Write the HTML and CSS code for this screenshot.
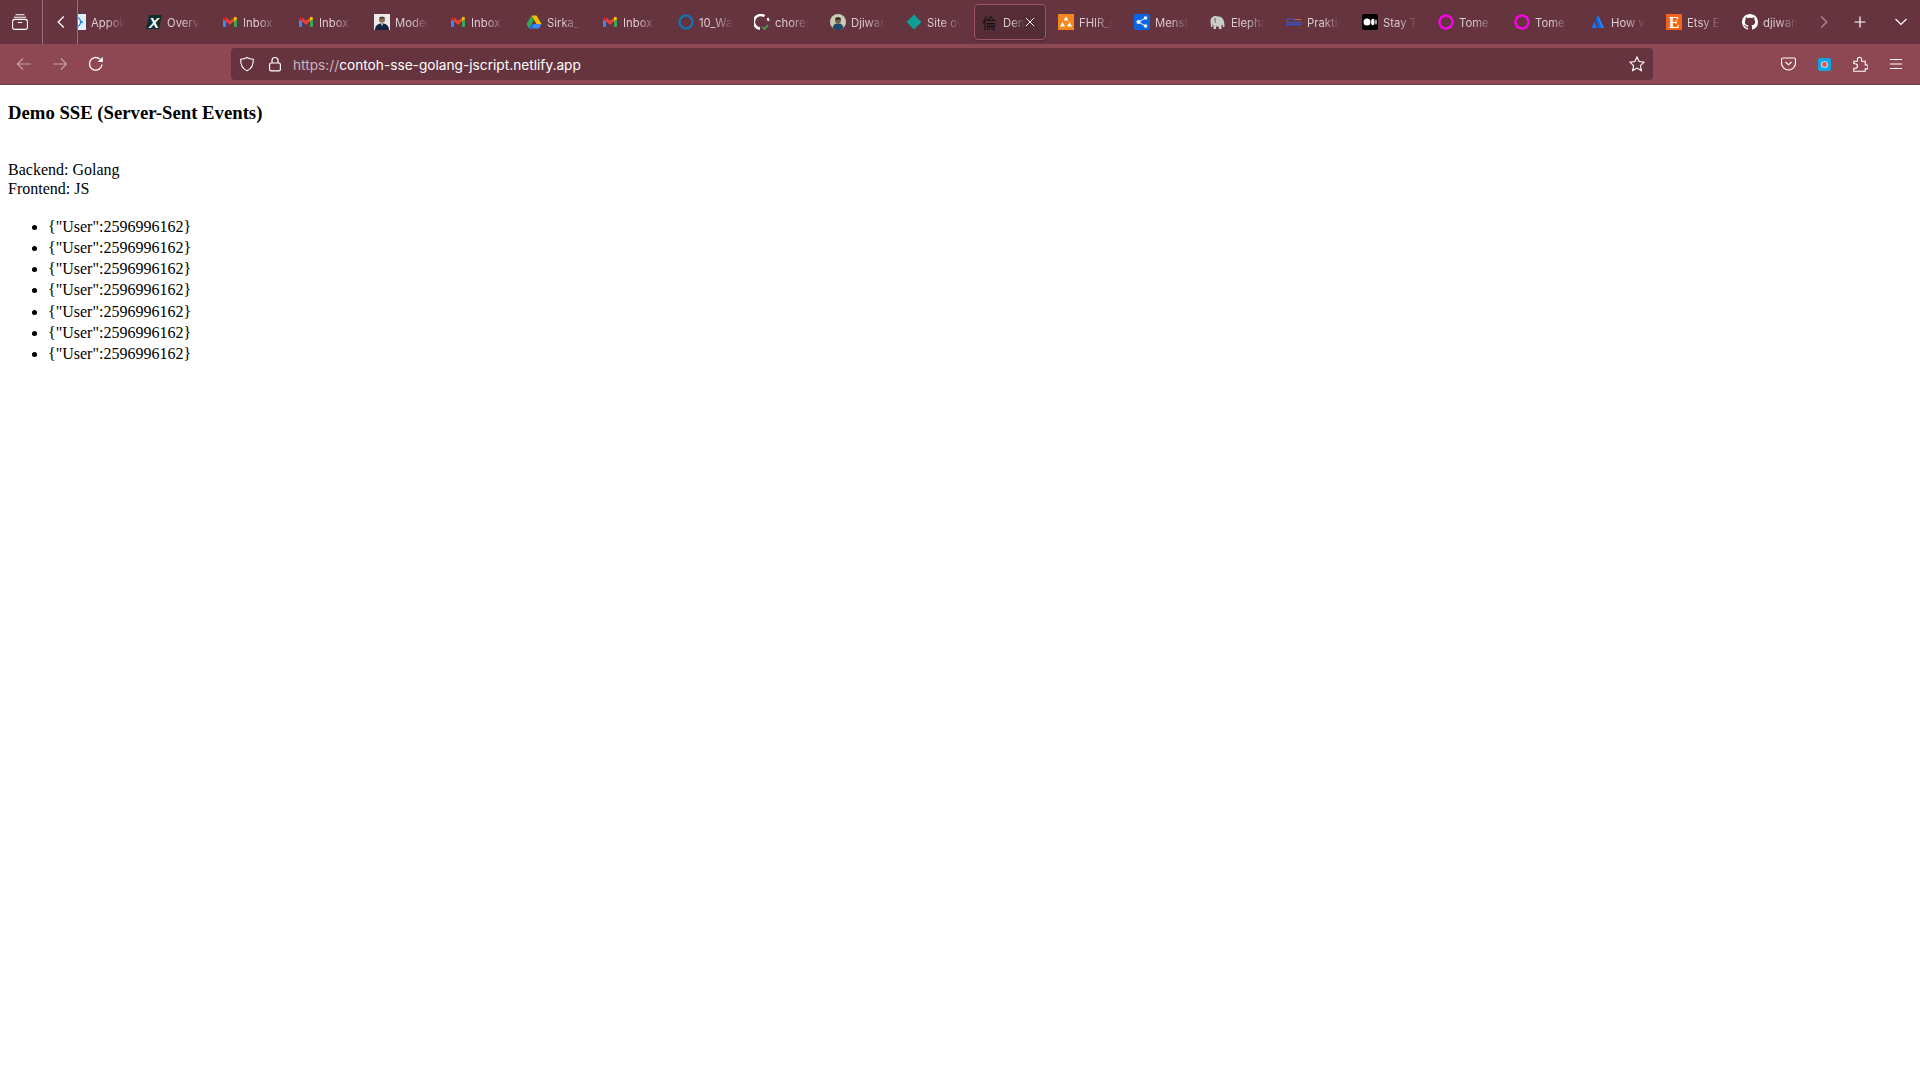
FILE: index.html
```html
<!DOCTYPE html>
<html lang="en">
<head>
<meta charset="utf-8">
<title>Demo SSE</title>
<link rel="stylesheet" href="styles.css">
</head>
<body>
<header class="chrome">
  <div class="tabbar">
    <button class="tb-btn view-btn" aria-label="Firefox View">
      <svg width="16" height="16" viewBox="0 0 16 16" fill="none" stroke="#fff" stroke-width="1.100"><path d="M3.500 .8h9M1.800 3.300h12.400"/><rect x=".6" y="5.400" width="14.800" height="10" rx="2.200"/><path d="M5.800 8.500h4.400"/></svg>
    </button>
    <button class="tb-btn scroll-left" aria-label="Scroll left">
      <svg width="12" height="14" viewBox="0 0 12 14" fill="none" stroke="#fff" stroke-width="1.300"><path d="M8.800 1.500 3.200 7l5.600 5.500"/></svg>
    </button>
    <div class="tabs">
      <div class="tab first"><span class="fav"><svg viewBox="0 0 16 16"><rect width="16" height="16" fill="#dbeeff"/><circle cx="6" cy="8" r="4.600" fill="#fff" stroke="#1e88e5" stroke-width="1.300"/><path d="M6 5.500V8h2" stroke="#1e88e5" fill="none"/><path d="m11 6.500 2.500 1.500-2.500 1.500z" fill="#1e88e5"/></svg></span><span class="lbl">Appoir</span></div>
      <div class="tab"><span class="fav"><svg viewBox="0 0 16 16"><path d="M3 1h13l-3 14H0z" fill="#10302f"/><text x="8" y="13.500" text-anchor="middle" class="x-mark">X</text></svg></span><span class="lbl">Overvi</span></div>
      <div class="tab"><span class="fav"><svg viewBox="0 0 16 16"><use href="#gmail"/></svg></span><span class="lbl">Inbox (</span></div>
      <div class="tab"><span class="fav"><svg viewBox="0 0 16 16"><use href="#gmail"/></svg></span><span class="lbl">Inbox (</span></div>
      <div class="tab"><span class="fav"><svg viewBox="0 0 16 16"><rect width="16" height="16" fill="#eceae8"/><circle cx="8" cy="5.800" r="3" fill="#8a6a58"/><path d="M5 4.500c0-2.500 6-2.500 6 0z" fill="#4a3a34"/><path d="M1 16c0-5 3.500-6.500 7-6.500s7 1.500 7 6.500z" fill="#14233f"/><path d="M7 9.500h2l-1 3z" fill="#e8e4e2"/></svg></span><span class="lbl">Moder</span></div>
      <div class="tab"><span class="fav"><svg viewBox="0 0 16 16"><use href="#gmail"/></svg></span><span class="lbl">Inbox (</span></div>
      <div class="tab"><span class="fav"><svg viewBox="0 0 16 16"><path d="M5.500 1.500h5L15.500 10h-5z" fill="#fbbc04"/><path d="M5.500 1.500 .5 10l2.500 4.500L8 6z" fill="#34a853"/><path d="M3 14.500h10l2.500-4.500h-10z" fill="#4285f4"/><path d="m5.500 10-2.500 4.500h3.500L8 10z" fill="#1a6fd8"/></svg></span><span class="lbl">Sirka_</span></div>
      <div class="tab"><span class="fav"><svg viewBox="0 0 16 16"><use href="#gmail"/></svg></span><span class="lbl">Inbox</span></div>
      <div class="tab"><span class="fav"><svg viewBox="0 0 16 16"><circle cx="8" cy="8" r="6.500" fill="none" stroke="#0a79bd" stroke-width="2.200"/></svg></span><span class="lbl">10_Wa</span></div>
      <div class="tab"><span class="fav"><svg viewBox="0 0 16 16"><path d="M10.500 2.200A6.800 6.800 0 1 0 6 14.600" fill="none" stroke="#fff" stroke-width="2.600"/><path d="M13.500 4a6.500 6.500 0 0 1 1 3" fill="none" stroke="#fff" stroke-width="2"/><path d="m8.500 13 2 2 3.500-4" fill="none" stroke="#3fb950" stroke-width="1.200"/></svg></span><span class="lbl">chore:</span></div>
      <div class="tab"><span class="fav"><svg viewBox="0 0 16 16"><circle cx="8" cy="8" r="8" fill="#c8ccb4"/><circle cx="8" cy="6.500" r="3" fill="#7a5c4c"/><path d="M5 5.500c0-3 6-3 6 0z" fill="#2b2420"/><path d="M2.500 14c1-4 3-4.500 5.500-4.500s4.500 .5 5.500 4.500A8 8 0 0 1 2.500 14z" fill="#1f4a66"/></svg></span><span class="lbl">Djiwan</span></div>
      <div class="tab"><span class="fav"><svg viewBox="0 0 16 16"><path d="M8 .5 15.500 8 8 15.500 .5 8z" fill="#0f9f97"/></svg></span><span class="lbl">Site ov</span></div>
      <div class="tab active"><span class="fav"><span class="kanji">倫</span></span><span class="lbl">Den</span>
        <svg class="close" width="10" height="10" viewBox="0 0 10 10" stroke="#fff" stroke-width="1"><path d="M1 1l8 8M9 1 1 9"/></svg>
      </div>
      <div class="tab"><span class="fav"><svg viewBox="0 0 16 16"><rect width="16" height="16" fill="#f5871f"/><path d="M8 2.500 10.500 6.500h-5zM4.500 8 7 12.500H2zM11.500 8 14 12.500H9z" fill="#fff"/></svg></span><span class="lbl">FHIR_s</span></div>
      <div class="tab"><span class="fav"><svg viewBox="0 0 16 16"><rect width="16" height="16" rx="2" fill="#0b66e4"/><path d="M4.500 8 11.500 4M4.500 8l7 4" stroke="#fff"/><circle cx="4.500" cy="8" r="2" fill="#fff"/><circle cx="11.500" cy="4" r="1.800" fill="#fff"/><circle cx="11.500" cy="12" r="1.800" fill="#fff"/></svg></span><span class="lbl">Menst</span></div>
      <div class="tab"><span class="fav"><svg viewBox="0 0 16 16"><path d="M.5 7c0-3 2.500-5 5-5 1 0 2 .5 3 .5 3 0 5 2 5.500 5 .3 2 .5 3 .5 5.500h-1.500l-.5-2.500-1 1V15h-2.500l-.5-2.500H6V15H3.500v-3l-1-2V13H1z" fill="#c9ccc8"/><path d="M4 4v4l2 1V4z" fill="#8f9490"/></svg></span><span class="lbl">Elepha</span></div>
      <div class="tab"><span class="fav"><svg viewBox="0 0 16 16"><path d="M1 5h8M1 5v3" fill="none" stroke="#4a4fb0" stroke-width="1.200"/><path d="M1 8.500h15M0 10.500h16" stroke="#3a50c0" stroke-width="1.300"/><path d="M9 5.500h6" stroke="#c2703a"/></svg></span><span class="lbl">Praktis</span></div>
      <div class="tab"><span class="fav"><svg viewBox="0 0 16 16"><rect width="16" height="16" rx="2" fill="#000"/><circle cx="5" cy="8" r="3.500" fill="#fff"/><ellipse cx="10.800" cy="8" rx="1.700" ry="3.200" fill="#fff"/><ellipse cx="14" cy="8" rx=".7" ry="2.800" fill="#fff"/></svg></span><span class="lbl">Stay T</span></div>
      <div class="tab"><span class="fav"><svg viewBox="0 0 16 16"><use href="#tome"/></svg></span><span class="lbl">Tome</span></div>
      <div class="tab"><span class="fav"><svg viewBox="0 0 16 16"><use href="#tome"/></svg></span><span class="lbl">Tome</span></div>
      <div class="tab"><span class="fav"><svg viewBox="0 0 16 16"><path d="M7.200 1.500 12 14h-3.500L5.700 6z" fill="#0c66e4"/><path d="M8.300 1.500 14 14h-2.500L7.400 3z" fill="#2684ff"/><path d="M4.300 7.500 7 14H1.500z" fill="#1a73f0"/></svg></span><span class="lbl">How w</span></div>
      <div class="tab"><span class="fav"><svg viewBox="0 0 16 16"><rect width="16" height="16" fill="#f1641e"/><text x="8" y="13.500" text-anchor="middle" class="etsy-mark">E</text></svg></span><span class="lbl">Etsy E</span></div>
      <div class="tab"><span class="fav"><svg viewBox="0 0 16 16"><path fill="#fff" fill-rule="evenodd" d="M8 0C3.580 0 0 3.580 0 8c0 3.540 2.290 6.530 5.470 7.590.4.070.55-.17.55-.38 0-.19-.01-.82-.01-1.490-2.010.37-2.530-.49-2.690-.94-.09-.23-.48-.94-.82-1.130-.28-.15-.68-.52-.01-.53.630-.01 1.080.58 1.230.82.720 1.210 1.870.87 2.330.66.070-.52.280-.87.510-1.070-1.780-.2-3.640-.89-3.640-3.950 0-.87.310-1.590.820-2.150-.08-.2-.36-1.020.08-2.120 0 0 .67-.21 2.200.82.640-.18 1.320-.27 2-.27s1.360.09 2 .27c1.530-1.040 2.200-.82 2.200-.82.440 1.100.16 1.920.08 2.120.51.560.82 1.270.82 2.150 0 3.070-1.870 3.750-3.650 3.950.29.250.54.730.54 1.480 0 1.070-.01 1.930-.01 2.200 0 .21.150.46.550.38A8.010 8.010 0 0 0 16 8c0-4.420-3.580-8-8-8z"/></svg></span><span class="lbl">djiwan</span></div>
    </div>
    <button class="tb-btn scroll-right" aria-label="Scroll right">
      <svg width="12" height="14" viewBox="0 0 12 14" fill="none" stroke="#a98b92" stroke-width="1.300"><path d="M3.200 1.500 8.800 7l-5.600 5.500"/></svg>
    </button>
    <button class="tb-btn new-tab" aria-label="New tab">
      <svg width="14" height="14" viewBox="0 0 14 14" stroke="#fff" stroke-width="1.200"><path d="M7 1.500v11M1.500 7h11"/></svg>
    </button>
    <button class="tb-btn all-tabs" aria-label="All tabs">
      <svg width="14" height="10" viewBox="0 0 14 10" fill="none" stroke="#fff" stroke-width="1.200"><path d="M1.500 2 7 7.500 12.500 2"/></svg>
    </button>
  </div>
  <nav class="navbar">
    <button class="nav-btn dim" aria-label="Back"><svg width="16" height="14" viewBox="0 0 16 14" fill="none" stroke="#c4a0a8" stroke-width="1.100"><path d="M15 7H1.500M7 1.500 1.500 7 7 12.500"/></svg></button>
    <button class="nav-btn dim" aria-label="Forward"><svg width="16" height="14" viewBox="0 0 16 14" fill="none" stroke="#c4a0a8" stroke-width="1.100"><path d="M1 7h13.500M9 1.500 14.500 7 9 12.500"/></svg></button>
    <button class="nav-btn" aria-label="Reload"><svg width="16" height="16" viewBox="0 0 16 16" fill="none" stroke="#fff" stroke-width="1.300"><path d="M14 8.500A6.300 6.300 0 1 1 11.800 3"/><path d="M14.800 .8v5.200H9.600z" fill="#fff" stroke="none"/></svg></button>
    <div class="urlbar">
      <svg class="shield" width="16" height="16" viewBox="0 0 16 16" fill="none" stroke="#fff" stroke-width="1.100"><path d="M8 1.500c2 1.200 4 1.600 6.300 1.700.2 5.800-1.700 9.600-6.300 11.500C3.400 12.800 1.500 9 1.700 3.200 4 3.100 6 2.700 8 1.500z"/></svg>
      <svg class="lock" width="14" height="16" viewBox="0 0 14 16" fill="none" stroke="#fff" stroke-width="1.200"><rect x="1.600" y="7" width="10.800" height="7.800" rx="1.600"/><path d="M4 7V4.500a3 3 0 0 1 6 0V7"/></svg>
      <div class="url"><span class="scheme">https://</span>contoh-sse-golang-jscript.netlify.app</div>
      <svg class="star" width="16" height="16" viewBox="0 0 16 16" fill="none" stroke="#fff" stroke-width="1.100"><path d="m8 1 2.100 4.600 5 .6-3.700 3.400 1 5L8 12.100l-4.400 2.500 1-5L.9 6.200l5-.6z"/></svg>
    </div>
    <div class="nav-tools">
      <span class="tool"><svg width="15" height="14" viewBox="0 0 15 14" fill="none" stroke="#fff" stroke-width="1.100"><path d="M2 1h11a1.500 1.500 0 0 1 1.500 1.500V6A7 7 0 0 1 .5 6V2.500A1.500 1.500 0 0 1 2 1z"/><path d="m4.500 5 3 2.800 3-2.800"/></svg></span>
      <span class="tool"><svg width="13" height="13" viewBox="0 0 13 13"><rect width="13" height="13" rx="2" fill="#0ca5e0"/><circle cx="6.500" cy="6.500" r="3.600" fill="#9fe4f4"/><circle cx="6.500" cy="6.500" r="2.400" fill="#f0504a"/></svg></span>
      <span class="tool"><svg width="16" height="16" viewBox="0 0 16 16" fill="none" stroke="#fff" stroke-width="1.100"><path d="M1.800 7.500V5.200h3.600V3.400a2.100 2.100 0 0 1 4.200 0v1.800h3.600v3.700h1a2 2 0 0 1 0 4h-1v2.300H1.800v-3h1.400a2.200 2.200 0 0 0 0-4.500z"/></svg></span>
      <span class="tool"><svg width="14" height="12" viewBox="0 0 14 12" stroke="#fff" stroke-width="1.100"><path d="M1 1.500h12M1 6h12M1 10.500h12"/></svg></span>
    </div>
  </nav>
</header>
<main class="page">
  <h3>Demo SSE (Server-Sent Events)</h3>
  <br>
  Backend: Golang<br>
  Frontend: JS
  <ul>
    <li>{"User":2596996162}</li>
    <li>{"User":2596996162}</li>
    <li>{"User":2596996162}</li>
    <li>{"User":2596996162}</li>
    <li>{"User":2596996162}</li>
    <li>{"User":2596996162}</li>
    <li>{"User":2596996162}</li>
  </ul>
</main>
<svg class="defs" width="0" height="0" aria-hidden="true">
  <defs>
    <g id="gmail">
      <path d="M1 5v7a1 1 0 0 0 1 1h2V7z" fill="#4285f4"/>
      <path d="M15 5v7a1 1 0 0 1-1 1h-2V7z" fill="#34a853"/>
      <path d="M4 3.500 8 6.800l4-3.300v4L8 10.800 4 7.500z" fill="#ea4335"/>
      <path d="M1 5c0-2 2-2.800 3-1.500v4L1 5z" fill="#c5221f"/>
      <path d="M15 5c0-2-2-2.800-3-1.500v4L15 5z" fill="#fbbc04"/>
    </g>
    <path id="tome" d="M8 1.200 12.800 3.200 14.800 8 12.800 12.800 8 14.800 3.200 12.800 1.200 8 3.200 3.200z" fill="none" stroke="#ff00f0" stroke-width="2.200"/>
  </defs>
</svg>
</body>
</html>
```
FILE: styles.css
```css
html, body { margin: 0; padding: 0; background: #fff; }
body { font-family: "Liberation Serif", "Times New Roman", serif; font-size: 16px; color: #000; height: 1080px; overflow: hidden; }
button { background: none; border: 0; padding: 0; margin: 0; display: flex; align-items: center; justify-content: center; }
.chrome { font-family: Inter, "Liberation Sans", sans-serif; }
.tabbar { height: 44px; background: #66343e; display: flex; align-items: stretch; }
.tb-btn { flex: none; }
.view-btn { width: 43px; padding-right: 3px; box-sizing: border-box; border-right: 1px solid #96707a; }
.scroll-left { width: 35px; box-sizing: border-box; padding-left: 2px; border-right: 1px solid #96707a; }
.tabs { flex: none; display: flex; overflow: hidden; width: 1737px; }
.tab { flex: none; width: 76px; box-sizing: border-box; display: flex; align-items: center; padding: 0 13px 0 8px; gap: 5px; color: #fff; position: relative; height: 44px; }
.tab.first { margin-left: -16px; }
.fav { flex: none; width: 16px; height: 16px; display: flex; }
.fav svg { width: 16px; height: 16px; display: block; }
.lbl { flex: 1; min-width: 0; overflow: hidden; white-space: nowrap; font-size: 11.300px; line-height: 16px; padding-top: 2px; color: #dccbd0; -webkit-mask-image: linear-gradient(to right, #000 45%, transparent 100%); mask-image: linear-gradient(to right, #000 45%, transparent 100%); }
.tab.active::before { content: ""; position: absolute; left: 0; top: 4px; bottom: 4px; right: 4px; background: #542d36; border: 1px solid #a0566a; border-radius: 4px; box-sizing: border-box; box-shadow: 0 1px 2px rgba(0,0,0,.2); }
.tab.active > * { position: relative; }
.tab.active .lbl { flex: none; width: 22px; -webkit-mask-image: linear-gradient(to right, #000 40%, transparent 100%); mask-image: linear-gradient(to right, #000 40%, transparent 100%); }
.tab.active .close { flex: none; position: absolute; right: 15px; top: 17px; }
.kanji { font-family: "Noto Sans CJK TC", sans-serif; font-size: 14px; line-height: 16px; color: #111; }
.x-mark { font-family: "Liberation Sans", sans-serif; font-weight: 700; font-style: italic; font-size: 15px; fill: #fff; }
.etsy-mark { font-family: "Liberation Serif", serif; font-weight: 700; font-size: 16px; fill: #fff; }
.scroll-right { width: 18px; }
.new-tab { width: 44px; margin-left: 5px; }
.all-tabs { width: 34px; margin-left: 2px; padding-bottom: 1px; }
.navbar { height: 40px; background: #8e4854; display: flex; align-items: center; border-bottom: 1px solid #6e3a46; box-sizing: content-box; padding-right: 6px; }
.nav-btn { flex: none; width: 36px; height: 40px; }
.nav-btn:first-child { margin-left: 6px; }
.urlbar { flex: none; margin-left: 117px; width: 1422px; height: 32px; border-radius: 4px; background: #66343e; display: flex; align-items: center; padding: 0 8px; box-sizing: border-box; color: #fff; }
.shield { flex: none; margin-left: 0; }
.lock { flex: none; margin-left: 13px; }
.url { flex: 1; margin-left: 11px; font-size: 13.700px; padding-top: 1px; white-space: nowrap; }
.scheme { color: #c9b5ba; }
.star { flex: none; }
.nav-tools { flex: 1; display: flex; align-items: center; justify-content: flex-end; }
.tool { flex: none; width: 36px; display: flex; align-items: center; justify-content: center; }
.page { padding: 0 8px; line-height: 19px; }
h3 { font-size: 18.720px; line-height: 21px; font-weight: 700; margin: 16.700px 0 18.200px; }
ul { margin: 18px 0 16px; padding-left: 40px; }
li { line-height: 21.200px; }
.defs { position: absolute; }
```
